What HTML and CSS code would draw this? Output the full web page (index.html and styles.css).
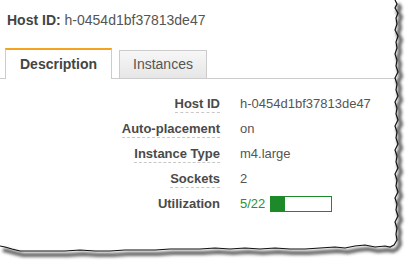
FILE: index.html
```html
<html>
    <head>
        <title>Host details</title>
        <link rel="stylesheet" href="styles.css">
    </head>
    <body>
        <div class="page">
            <h2 class="host-title"><b>Host ID:</b> h-0454d1bf37813de47</h2>
            <div class="tabs">
                <div class="tab active">Description</div>
                <div class="tab">Instances</div>
            </div>
            <div class="details">
                <div class="label"><span class="hint">Host ID</span></div>
                <div class="value">h-0454d1bf37813de47</div>
                <div class="label"><span class="hint">Auto-placement</span></div>
                <div class="value">on</div>
                <div class="label"><span class="hint">Instance Type</span></div>
                <div class="value">m4.large</div>
                <div class="label"><span class="hint">Sockets</span></div>
                <div class="value">2</div>
                <div class="label">Utilization</div>
                <div class="value usage">
                    <span class="usage-text">5/22</span>
                    <span class="bar"><span class="bar-fill" style="width: 14px;"></span></span>
                </div>
            </div>
        </div>
        <!-- torn paper edge -->
        <svg class="torn" width="413" height="263" viewBox="0 0 413 263">
            <defs>
                <filter id="blur" x="-10%" y="-10%" width="120%" height="120%">
                    <feGaussianBlur stdDeviation="1.4"/>
                </filter>
            </defs>
            <polyline class="torn-shadow" filter="url(#blur)" transform="translate(3,4)"
                points="395,0 397,4 395,8 398,13 396,18 397,24 395,30 398,36 396,42 397,48 395,54 397,60 396,66 398,72 395,78 397,84 396,90 398,96 395,102 397,108 396,114 398,120 395,126 397,132 396,138 398,144 395,150 397,156 396,162 398,168 395,174 397,180 396,186 398,192 395,198 397,204 396,210 398,216 395,222 397,228 396,234 397,240 394,245 390,247 385,246 375,247 365,245 355,246 345,248 335,247 320,248 305,249 290,249 275,248 260,249 245,248 230,249 215,248 200,249 185,249 170,249 155,250 140,250 125,250 110,251 95,251 80,250 65,251 50,251 35,251 20,251 12,249 5,247 0,246"/>
            <polyline class="torn-line"
                points="395,0 397,4 395,8 398,13 396,18 397,24 395,30 398,36 396,42 397,48 395,54 397,60 396,66 398,72 395,78 397,84 396,90 398,96 395,102 397,108 396,114 398,120 395,126 397,132 396,138 398,144 395,150 397,156 396,162 398,168 395,174 397,180 396,186 398,192 395,198 397,204 396,210 398,216 395,222 397,228 396,234 397,240 394,245 390,247 385,246 375,247 365,245 355,246 345,248 335,247 320,248 305,249 290,249 275,248 260,249 245,248 230,249 215,248 200,249 185,249 170,249 155,250 140,250 125,250 110,251 95,251 80,250 65,251 50,251 35,251 20,251 12,249 5,247 0,246"/>
        </svg>
    </body>
</html>
```

FILE: styles.css
```css
body
{
    margin: 0;
    background: #fff;
    font-family: "Liberation Sans", Arial, sans-serif;
    color: #444;
}

.page
{
    width: 396px;
}

.host-title
{
    margin: 0;
    padding: 12px 0 0 7px;
    font-size: 14px;
    line-height: 16px;
    font-weight: normal;
    color: #555;
}

.host-title b
{
    color: #444;
}

.tabs
{
    display: flex;
    align-items: flex-end;
    margin-top: 20px;
    padding-left: 5px;
    border-bottom: 1px solid #ccc;
}

.tab
{
    box-sizing: border-box;
    height: 28px;
    line-height: 26px;
    padding: 0 13px;
    margin-left: 7px;
    font-size: 14px;
    color: #555;
    border: 1px solid #ccc;
    border-bottom: none;
    background: linear-gradient(#f7f7f7, #e6e6e6);
}

.tab.active
{
    height: 31px;
    line-height: 28px;
    margin-left: 0;
    margin-bottom: -1px;
    width: 107px;
    text-align: center;
    padding: 0;
    font-weight: bold;
    color: #444;
    background: #fff;
    border-top: 2px solid #f4a320;
}

.details
{
    display: grid;
    grid-template-columns: 220px auto;
    grid-auto-rows: 25px;
    column-gap: 20px;
    align-items: center;
    padding-top: 12px;
    font-size: 13px;
}

.label
{
    justify-self: end;
    font-weight: bold;
    color: #4a4a4a;
}

.hint
{
    border-bottom: 1px dashed #c8c8c8;
    padding-bottom: 1px;
}

.value
{
    color: #555;
}

.usage
{
    display: flex;
    align-items: center;
    gap: 5px;
}

.usage-text
{
    color: #2f8f2f;
}

.bar
{
    display: flex;
    box-sizing: border-box;
    width: 62px;
    height: 16px;
    border: 1px solid #1d8a2a;
}

.bar-fill
{
    background: #1d8a2a;
}

.torn
{
    position: absolute;
    top: 0;
    left: 0;
    pointer-events: none;
}

.torn-shadow
{
    fill: none;
    stroke: #666;
    stroke-width: 4;
}

.torn-line
{
    fill: none;
    stroke: #111;
    stroke-width: 1.2;
}
```
